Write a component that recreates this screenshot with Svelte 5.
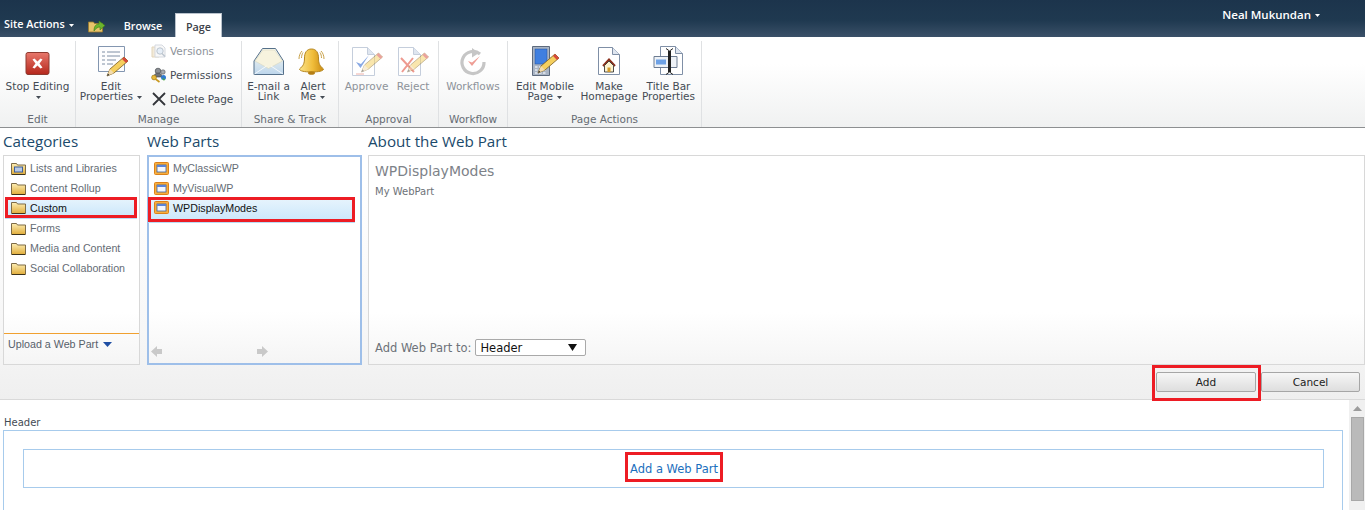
<script>
	const categories = [
		{ name: 'Lists and Libraries', lib: true },
		{ name: 'Content Rollup' },
		{ name: 'Custom', selected: true },
		{ name: 'Forms' },
		{ name: 'Media and Content' },
		{ name: 'Social Collaboration' }
	];
	const parts = [
		{ name: 'MyClassicWP' },
		{ name: 'MyVisualWP' },
		{ name: 'WPDisplayModes', selected: true }
	];
</script>

{#snippet caret()}
	<svg class="caret" width="5" height="3" viewBox="0 0 5 3"><path d="M0 0h5L2.5 3z" fill="currentColor" /></svg>
{/snippet}

<!-- pencil runs from tip (0,19) up to the eraser (21,4) -->
{#snippet pencil(x, y, faded)}
	<g transform="translate({x} {y})" opacity={faded ? 0.5 : 1}>
		<path d="M0 19l3-7L17 0l4 4L7 16z" fill="#f5cf5e" stroke="#7a5a1c" stroke-width=".8" />
		<path d="M0 19l3-7 4 4z" fill="#f3dcae" />
		<path d="M0 19l1-2.500 1.500 1.500z" fill="#333" />
		<path d="M17 0l4 4-2 2-4-4z" fill="#d6483c" />
	</g>
{/snippet}

{#snippet page(x, y, w, h, colour)}
	<path d="M{x + 0.5} {y + 0.5}h{w - 8}l7 7v{h - 8}h-{w - 1}z" fill="#fff" stroke={colour} />
	<path d="M{x + w - 7.5} {y + 0.5}v7h7" fill="#dfe6f0" stroke={colour} />
{/snippet}

<div class="page">
	<header class="topbar">
		<div class="topbar-left">
			<span class="site-actions">Site Actions {@render caret()}</span>
			<svg class="nav-up" width="18" height="16" viewBox="0 0 18 16">
				<path d="M.5 5h5l1 1.500h8V15H.5z" fill="#e8c46a" stroke="#9b7a2e" stroke-width=".8" />
				<path d="M6 14c0-5 2-7 5-7V4l6 4.500L12 13V10c-2 0-4 1-6 4z" fill="#6cb52d" stroke="#3d7d16" stroke-width=".6" />
			</svg>
			<span class="tab">Browse</span>
			<span class="tab active">Page</span>
		</div>
		<span class="user">Neal Mukundan {@render caret()}</span>
	</header>

	<section class="ribbon">
		<div class="group">
			<div class="group-body">
				<div class="big-btn stop">
					<svg width="36" height="32" viewBox="0 0 36 32">
						<defs>
							<linearGradient id="red" x1="0" y1="0" x2="0" y2="1">
								<stop offset="0" stop-color="#e8786c" />
								<stop offset="1" stop-color="#b5271c" />
							</linearGradient>
						</defs>
						<rect x="6" y="6.500" width="23" height="22" rx="2" fill="url(#red)" stroke="#8e3a30" />
						<path d="M12.500 13.500l2-1 3 3 3-3 2 1-3 4 3 4-2 1-3-3-3 3-2-1 3-4z" fill="#fff" />
					</svg>
					<span class="lbl">Stop Editing</span>
					<span class="lbl">{@render caret()}</span>
				</div>
			</div>
			<div class="group-name">Edit</div>
		</div>

		<div class="group">
			<div class="group-body">
				<div class="big-btn edit-props">
					<svg width="36" height="32" viewBox="0 0 36 32">
						<path d="M5.500.5h26v25h-26z" fill="#fdfdfe" stroke="#8396b0" />
						<path d="M9 6h3M14 6h13M9 10h3M14 10h13M9 14h3M14 14h9M9 18h3M14 18h6" stroke="#7f8ea4" />
						{@render pencil(14, 11)}
					</svg>
					<span class="lbl">Edit</span>
					<span class="lbl">Properties {@render caret()}</span>
				</div>
				<div class="small-col">
					<div class="small-btn disabled">
						<svg width="16" height="16" viewBox="0 0 16 16">
							<path d="M1 4h7v10H1z" fill="#f3ead8" stroke="#e2d5bb" />
							<path d="M4 2h7l3 3v9H4z" fill="#f8f8f8" stroke="#d5d9e0" />
							<circle cx="9" cy="8" r="3.200" fill="#e6eef7" stroke="#bcc5cf" />
							<path d="M11 10.500l3 3" stroke="#bcc5cf" stroke-width="1.500" />
						</svg>
						Versions
					</div>
					<div class="small-btn">
						<svg width="16" height="16" viewBox="0 0 16 16">
							<circle cx="7" cy="4" r="2.800" fill="#8b8f95" stroke="#4a4d52" stroke-width=".7" />
							<path d="M3 10c0-3 2-4 4-4s4 1 4 4z" fill="#6e7278" stroke="#3f4246" stroke-width=".6" />
							<circle cx="12" cy="5" r="2.200" fill="#a7abb0" stroke="#55585c" stroke-width=".6" />
							<circle cx="12.500" cy="10.500" r="2.500" fill="#2f7bd0" />
							<path d="M11 11l3 1-1 2z" fill="#4aa83a" />
							<circle cx="3" cy="10.500" r="2.400" fill="#e8b93a" stroke="#8d6c16" stroke-width=".6" />
							<path d="M4.500 12l4 3" stroke="#c9981f" stroke-width="1.600" />
						</svg>
						Permissions
					</div>
					<div class="small-btn">
						<svg width="16" height="16" viewBox="0 0 16 16">
							<path d="M2 2l12 12M14 2L2 14" stroke="#33363a" stroke-width="1.800" />
						</svg>
						Delete Page
					</div>
				</div>
			</div>
			<div class="group-name">Manage</div>
		</div>

		<div class="group">
			<div class="group-body">
				<div class="big-btn share">
					<svg width="36" height="32" viewBox="0 0 36 32">
						<defs>
							<linearGradient id="env" x1="0" y1="0" x2="0" y2="1">
								<stop offset="0" stop-color="#fbfaf0" />
								<stop offset="1" stop-color="#bdd6ec" />
							</linearGradient>
						</defs>
						<path d="M3 15l8.500-12.500h13L32.500 15v13.500H3z" fill="url(#env)" stroke="#55708a" />
						<path d="M4 15l8-11h11.500l8 11-14 7.500z" fill="#f7f3de" stroke="#d9d6bf" stroke-width=".6" />
						<path d="M3.500 28l12-8M32 28l-12-8" stroke="#fff" stroke-width=".8" />
					</svg>
					<span class="lbl">E-mail a</span>
					<span class="lbl">Link</span>
				</div>
				<div class="big-btn alert">
					<svg width="36" height="32" viewBox="0 0 36 32">
						<defs>
							<linearGradient id="bell" x1="0" y1="0" x2="1" y2="0">
								<stop offset="0" stop-color="#fbe48c" />
								<stop offset=".55" stop-color="#f0bd3a" />
								<stop offset="1" stop-color="#c98a12" />
							</linearGradient>
						</defs>
						<path d="M16.500 3c5 0 7 4 7 9 0 6 1.500 8 5 11 0 2-5 3-12 3s-12-1-12-3c3.500-3 5-5 5-11 0-5 2-9 7-9z" fill="url(#bell)" stroke="#b5861f" />
						<ellipse cx="16.500" cy="27" rx="3.500" ry="1.800" fill="#b57f14" />
						<path d="M4 13c0-3 1-6 3-8M6.500 12c0-2 .5-4 1.500-5.500M29 13c0-3-1-6-3-8M26.500 12c0-2-.5-4-1.500-5.500" fill="none" stroke="#c9a24a" />
					</svg>
					<span class="lbl">Alert</span>
					<span class="lbl">Me {@render caret()}</span>
				</div>
			</div>
			<div class="group-name">Share &amp; Track</div>
		</div>

		<div class="group">
			<div class="group-body">
				<div class="big-btn approve disabled">
					<svg width="36" height="32" viewBox="0 0 36 32">
						{@render page(3, 1, 23, 29, '#c5cedc')}
						<path d="M7 16l4.500 6L20 9l-8 9z" fill="#88a8e4" />
						<path d="M7 28h8" stroke="#eeb0a8" />
						{@render pencil(12.500, 7, true)}
					</svg>
					<span class="lbl">Approve</span>
				</div>
				<div class="big-btn reject disabled">
					<svg width="36" height="32" viewBox="0 0 36 32">
						{@render page(3, 1, 23, 29, '#c5cedc')}
						<path d="M6 12l13 14M18 12L7 26" stroke="#ee9a90" stroke-width="2" />
						{@render pencil(12.500, 7, true)}
					</svg>
					<span class="lbl">Reject</span>
				</div>
			</div>
			<div class="group-name">Approval</div>
		</div>

		<div class="group">
			<div class="group-body">
				<div class="big-btn workflow disabled">
					<svg width="36" height="32" viewBox="0 0 36 32">
						<path d="M25 8a11 11 0 1 0 4 8" fill="none" stroke="#c6c6c6" stroke-width="3.200" />
						<path d="M17 2l7 5-7 4.500z" fill="#c6c6c6" />
						<path d="M13 15l4 5 8-10-8 6.500z" fill="#ee9d94" />
					</svg>
					<span class="lbl">Workflows</span>
				</div>
			</div>
			<div class="group-name">Workflow</div>
		</div>

		<div class="group last">
			<div class="group-body">
				<div class="big-btn mobile">
					<svg width="36" height="32" viewBox="0 0 36 32">
						<path d="M5.500.5h17v29h-17z" fill="#a9b4c4" stroke="#5d6a7d" />
						<rect x="8" y="3" width="12" height="15" fill="#3f7fe0" stroke="#24509c" stroke-width=".5" />
						<path d="M8 21h11M8 24h11M8 27h11" stroke="#e6eaf0" stroke-dasharray="2.500 1.500" stroke-width="1.500" />
						{@render pencil(11, 8)}
					</svg>
					<span class="lbl">Edit Mobile</span>
					<span class="lbl">Page {@render caret()}</span>
				</div>
				<div class="big-btn home">
					<svg width="36" height="32" viewBox="0 0 36 32">
						{@render page(7, 1, 22, 28, '#7f8fa6')}
						<path d="M12 20l6-6.500 6 6.500" fill="none" stroke="#8a2f1c" stroke-width="2" />
						<path d="M13.500 19.500l4.500-4.500 4.500 4.500V26h-9z" fill="#fbf2cf" stroke="#222" stroke-width=".8" />
						<path d="M16.500 21.500h3V26h-3z" fill="#d49a2a" />
					</svg>
					<span class="lbl">Make</span>
					<span class="lbl">Homepage</span>
				</div>
				<div class="big-btn titlebar">
					<svg width="36" height="32" viewBox="0 0 36 32">
						{@render page(9, 0, 23, 29, '#7f8fa6')}
						<path d="M3 10.500h23v11H3z" fill="#eef2f7" stroke="#6d7c92" />
						<rect x="5" y="13.500" width="10" height="5" fill="#6ea2e6" />
						<path d="M15 2.500l3.500 2.500 3.500-2.500M15 28.500l3.500-2.500 3.500 2.500" stroke="#222" fill="none" />
						<rect x="17" y="5" width="3" height="21" fill="#222" />
					</svg>
					<span class="lbl">Title Bar</span>
					<span class="lbl">Properties</span>
				</div>
			</div>
			<div class="group-name">Page Actions</div>
		</div>
	</section>

	<section class="adder">
		<div class="columns">
			<div class="col cats">
				<h2>Categories</h2>
				<div class="box">
					<ul class="list">
						{#each categories as cat}
							<li class:selected={cat.selected}>
								<svg width="15" height="13" viewBox="0 0 15 13">
									<defs>
										<linearGradient id="folder" x1="0" y1="0" x2="0" y2="1">
											<stop offset="0" stop-color="#fdeeb4" />
											<stop offset="1" stop-color="#e0ac3a" />
										</linearGradient>
									</defs>
									<path d="M.5 1.500h5l1 1.500h8v9.500H.5z" fill="url(#folder)" stroke="#7d6b46" />
									<path d="M1 12.500h13" stroke="#3d3219" />
									{#if cat.lib}
										<rect x="3.500" y="5" width="8" height="5" fill="#b7c8e4" stroke="#3e5f9b" />
									{/if}
								</svg>
								{cat.name}
							</li>
						{/each}
					</ul>
					<div class="upload">
						Upload a Web Part
						<svg width="9" height="5" viewBox="0 0 9 5"><path d="M0 0h9L4.500 5z" fill="#1f4ea3" /></svg>
					</div>
				</div>
			</div>

			<div class="col parts">
				<h2>Web Parts</h2>
				<div class="box active">
					<ul class="list">
						{#each parts as part}
							<li class:selected={part.selected}>
								<svg width="15" height="13" viewBox="0 0 15 13">
									<rect x=".5" y=".5" width="14" height="12" rx="1" fill="#f9ae3c" stroke="#dc8118" />
									<rect x="3" y="3" width="9" height="7" fill="#f4f7fc" stroke="#3e5f9b" stroke-width=".8" />
									<rect x="3" y="3" width="9" height="2" fill="#5c85d6" />
								</svg>
								{part.name}
							</li>
						{/each}
					</ul>
					<div class="pager">
						<svg width="12" height="11" viewBox="0 0 12 11"><path d="M0 5.500L6 0v3h5v5H6v3z" fill="#c9c9c9" /></svg>
						<svg width="12" height="11" viewBox="0 0 12 11"><path d="M12 5.500L6 0v3H1v5h5v3z" fill="#c9c9c9" /></svg>
					</div>
				</div>
			</div>

			<div class="col about">
				<h2>About the Web Part</h2>
				<div class="box">
					<div class="about-title">WPDisplayModes</div>
					<div class="about-desc">My WebPart</div>
					<div class="add-to">
						Add Web Part to:
						<span class="fake-select">Header<svg width="9" height="7" viewBox="0 0 9 7"><path d="M0 0h9L4.500 7z" fill="#111" /></svg></span>
					</div>
				</div>
			</div>
		</div>

		<div class="actions">
			<span class="mark"><button class="btn">Add</button></span>
			<button class="btn cancel">Cancel</button>
		</div>
	</section>

	<section class="content">
		<div class="main">
			<div class="zone-label">Header</div>
			<div class="zone">
				<div class="zone-inner"><a href="#top">Add a Web Part</a></div>
			</div>
		</div>
		<div class="scrollbar">
			<svg width="9" height="5" viewBox="0 0 9 5"><path d="M0 5h9L4.500 0z" fill="#9c9c9c" /></svg>
			<div class="thumb"></div>
		</div>
	</section>
</div>

<style>
	:global(body) {
		margin: 0;
		overflow: hidden;
		background: #fff;
	}

	.page {
		width: 1365px;
		height: 510px;
		overflow: hidden;
		font-family: 'DejaVu Sans', Verdana, sans-serif;
		font-size: 10.5px;
		color: #444b54;
	}

	.topbar {
		height: 37px;
		box-sizing: border-box;
		display: flex;
		justify-content: space-between;
		background: linear-gradient(#1c344c, #1f3950 55%, #3a5068);
		color: #fff;
		font-family: 'Open Sans', sans-serif;
		font-size: 10.8px;
		font-weight: 600;
	}

	.topbar-left {
		display: flex;
		align-items: flex-end;
	}

	.site-actions {
		align-self: flex-start;
		margin: 16px 0 0 4px;
		width: 84px;
		white-space: nowrap;
	}

	.caret {
		vertical-align: middle;
		margin-left: 1px;
	}

	.nav-up {
		align-self: flex-start;
		margin: 17px 8px 0 0;
	}

	.tab {
		width: 58px;
		height: 24px;
		line-height: 26px;
		text-align: center;
		box-sizing: border-box;
	}

	.tab.active {
		width: 47px;
		margin-left: 3px;
		background: #fff;
		color: #3b4148;
		border: 1px solid #b9c2cc;
		border-bottom: 0;
		line-height: 25px;
	}

	.user {
		margin: 7px 45px 0 0;
		font-size: 11.5px;
	}

	.ribbon {
		height: 91px;
		box-sizing: border-box;
		display: flex;
		padding-top: 4px;
		background: linear-gradient(#fff 30%, #f0f1f1);
		border-bottom: 1px solid #8d8f91;
	}

	.group {
		display: flex;
		flex-direction: column;
		border-right: 1px solid #dfe1e3;
		box-sizing: border-box;
	}

	.group-body {
		height: 70px;
		display: flex;
	}

	.group-name {
		height: 16px;
		text-align: center;
		line-height: 16px;
		color: #666c73;
	}

	.big-btn {
		display: flex;
		flex-direction: column;
		align-items: center;
		line-height: 10px;
		white-space: nowrap;
		padding-top: 5px;
	}

	.big-btn > svg {
		margin-bottom: 3px;
		flex: none;
	}

	.disabled {
		color: #8d9299;
	}

	.stop {
		width: 75px;
	}

	.big-btn.edit-props {
		width: 70px;
	}

	.small-col {
		display: flex;
		flex-direction: column;
		height: 72px;
		margin-top: -2px;
		padding-left: 5px;
		width: 90px;
	}

	.small-btn {
		height: 24px;
		display: flex;
		align-items: center;
		gap: 3px;
		white-space: nowrap;
	}

	.share {
		width: 53px;
	}

	.alert {
		width: 36px;
		margin-right: 7px;
	}

	.approve {
		width: 55px;
	}

	.reject {
		width: 38px;
		margin-right: 6px;
	}

	.workflow {
		width: 68px;
	}

	.mobile {
		width: 74px;
	}

	.home {
		width: 54px;
	}

	.titlebar {
		width: 65px;
	}

	.adder {
		height: 272px;
		box-sizing: border-box;
		border-bottom: 1px solid #d9d9d9;
		background: linear-gradient(#fff 45px, #f7f7f7 200px, #efefef);
	}

	.columns {
		display: flex;
		height: 237px;
		padding-left: 3px;
	}

	.col {
		display: flex;
		flex-direction: column;
		box-sizing: border-box;
	}

	.cats {
		width: 144px;
	}

	.parts {
		width: 221px;
	}

	.about {
		flex: 1;
	}

	h2 {
		margin: 0;
		height: 27px;
		line-height: 27px;
		font-family: 'Open Sans', sans-serif;
		font-size: 15.2px;
		font-weight: 400;
		color: #1b4a6b;
	}

	.box {
		flex: 1;
		display: flex;
		flex-direction: column;
		box-sizing: border-box;
		border: 1px solid #d8d8d8;
		background: linear-gradient(#fff 75%, #f5f5f5);
	}

	.cats .box {
		width: 137px;
	}

	.parts .box {
		width: 215px;
		border: 2px solid #9ebfe9;
	}

	.list {
		list-style: none;
		margin: 0;
		padding: 2px 0 0;
		flex: 1;
	}

	.parts .list {
		padding-top: 1px;
	}

	.list li {
		height: 20px;
		display: flex;
		align-items: center;
		gap: 4px;
		padding-left: 7px;
		white-space: nowrap;
		font-family: 'Liberation Sans', Arial, sans-serif;
		font-size: 10.7px;
		color: #656c75;
	}

	.parts .list li {
		padding-left: 5px;
	}

	.list li.selected {
		color: #111;
		height: 21px;
		margin: -1px 2px 0 1px;
		padding-left: 6px;
		background: linear-gradient(#e9f5fd, #c9e6fb);
		outline: 3px solid #ed1c24;
		outline-offset: -3px;
		box-shadow: 0 1px 0 #b9dcf5;
	}

	.parts .list li.selected {
		height: 25px;
		margin: -1px 5px 0 -1px;
		padding: 0 0 4px 6px;
		box-sizing: border-box;
	}

	.upload {
		height: 31px;
		box-sizing: border-box;
		border-top: 1px solid #f0a030;
		padding: 2px 0 0 4px;
		line-height: 16px;
		color: #57606a;
		font-family: 'Liberation Sans', Arial, sans-serif;
		font-size: 10.7px;
	}

	.upload svg {
		margin-left: 2px;
		vertical-align: 1px;
	}

	.pager {
		display: flex;
		justify-content: space-between;
		padding: 0 0 6px 2px;
		width: 117px;
	}

	.about .box {
		padding: 7px 6px 8px;
	}

	.about-title {
		font-size: 14px;
		line-height: 17px;
		color: #7d8288;
	}

	.about-desc {
		flex: 1;
		margin-top: 5px;
		line-height: 14px;
		font-size: 10px;
		color: #6d7278;
	}

	.add-to {
		display: flex;
		align-items: center;
		gap: 4px;
		color: #6d7278;
		font-size: 11.5px;
		white-space: nowrap;
	}

	.fake-select {
		width: 111px;
		height: 17px;
		box-sizing: border-box;
		border: 1px solid #a9a9a9;
		border-radius: 2px;
		background: #fff;
		color: #111;
		display: flex;
		align-items: center;
		justify-content: space-between;
		padding: 0 8px 0 4px;
	}

	.actions {
		display: flex;
		justify-content: flex-end;
		align-items: flex-start;
		padding: 7px 5px 0 0;
	}

	.mark {
		display: flex;
		border: 3px solid #ed1c24;
		margin-top: -7px;
		padding: 4px 2px 6px 1px;
		position: relative;
		z-index: 1;
	}

	.btn {
		width: 100px;
		height: 20px;
		padding: 0;
		box-sizing: border-box;
		border: 1px solid #a6a6a6;
		border-radius: 2px;
		background: linear-gradient(#f6f6f6, #dedede);
		font: inherit;
		color: #222;
	}

	.cancel {
		width: 99px;
	}

	.content {
		height: 110px;
		display: flex;
	}

	.main {
		flex: 1;
		padding: 16px 6px 0 3px;
	}

	.zone-label {
		height: 14px;
		line-height: 14px;
		font-size: 10px;
		margin-left: 1px;
	}

	.zone {
		height: 90px;
		box-sizing: border-box;
		border: 1px solid #a7cbec;
		padding: 18px 18px 0 19px;
	}

	.zone-inner {
		height: 39px;
		box-sizing: border-box;
		border: 1px solid #a7cbec;
		display: flex;
		align-items: center;
		justify-content: center;
	}

	.zone-inner a {
		color: #1c6fbd;
		font-size: 11.5px;
		line-height: 14px;
		text-decoration: none;
		outline: 3px solid #ed1c24;
		outline-offset: 2px;
		padding: 5px 0 1px;
		margin: 0 0 4px 1px;
	}

	.scrollbar {
		width: 16px;
		background: #f0f0f0;
		display: flex;
		flex-direction: column;
		align-items: center;
		padding-top: 6px;
		box-sizing: border-box;
	}

	.thumb {
		width: 13px;
		height: 84px;
		margin-top: 6px;
		background: #bababa;
		border: 1px solid #a8a8a8;
		box-sizing: border-box;
	}
</style>
